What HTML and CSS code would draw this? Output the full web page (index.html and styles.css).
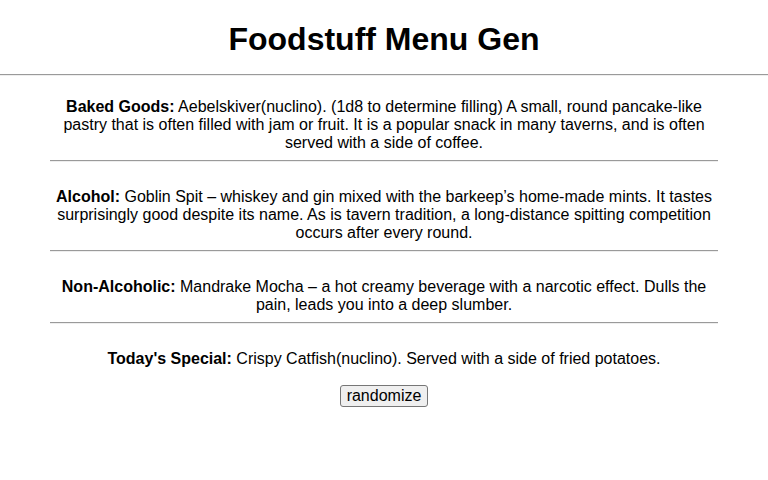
FILE: index.html
```html
<!DOCTYPE html>
<html lang="en">
<head>
<meta charset="utf-8">
<title>Foodstuff Menu Gen</title>
<link rel="stylesheet" href="styles.css">
</head>
<body>
<header class="site-header">
  <h1 class="title">Foodstuff Menu Gen</h1>
</header>
<hr class="rule rule-full">
<main class="menu">
  <p class="entry"><strong>Baked Goods:</strong> Aebelskiver(nuclino). (1d8 to determine filling) A small, round pancake-like pastry that is often filled with jam or fruit. It is a popular snack in many taverns, and is often served with a side of coffee.</p>
  <hr class="rule">
  <p class="entry"><strong>Alcohol:</strong> Goblin Spit – whiskey and gin mixed with the barkeep’s home-made mints. It tastes surprisingly good despite its name. As is tavern tradition, a long-distance spitting competition occurs after every round.</p>
  <hr class="rule">
  <p class="entry"><strong>Non-Alcoholic:</strong> Mandrake Mocha – a hot creamy beverage with a narcotic effect. Dulls the pain, leads you into a deep slumber.</p>
  <hr class="rule">
  <p class="entry"><strong>Today's Special:</strong> Crispy Catfish(nuclino). Served with a side of fried potatoes.</p>
  <div class="actions">
    <button class="btn" type="button">randomize</button>
  </div>
</main>
</body>
</html>
```
FILE: styles.css
```css
html, body {
  margin: 0;
  padding: 0;
  background: #ffffff;
  color: #000000;
  font-family: "Liberation Sans", Arial, sans-serif;
  font-size: 16px;
}

.site-header {
  padding: 21px 0 16px;
  text-align: center;
}

.title {
  margin: 0;
  font-size: 32px;
  font-weight: bold;
  line-height: normal;
}

.rule {
  height: 0;
  margin: 8px 0 25px;
  border: 0;
  border-top: 1px solid #9a9a9a;
  border-bottom: 1px solid #eeeeee;
}

.rule-full {
  margin: 0;
}

.menu {
  width: 668px;
  margin: 0 auto;
  padding-top: 21px;
  display: flex;
  flex-direction: column;
}

.entry {
  margin: 0;
  padding-top: 1px;
  text-align: center;
  line-height: 18px;
}

.entry strong {
  font-weight: bold;
}

.actions {
  display: flex;
  justify-content: center;
  margin-top: 17px;
}

.btn {
  font-family: "Liberation Sans", Arial, sans-serif;
  font-size: 16px;
  line-height: normal;
  color: #000000;
  background: #efefef;
  border: 1px solid #767676;
  border-radius: 3px;
  padding: 1px 6px;
}
```
